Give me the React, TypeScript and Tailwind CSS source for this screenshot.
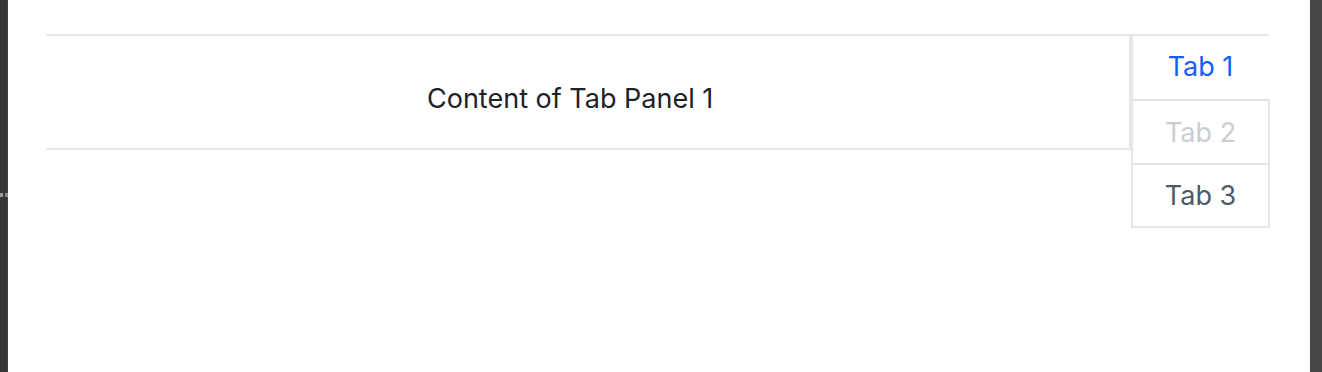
import React from "react";

export default function App() {
  return (
    <div className="flex h-[372px] w-full bg-white font-['Inter','Noto_Sans',sans-serif]">
      <div className="relative w-[8px] shrink-0 bg-[#363636] border-r border-[#424242]">
        <div className="absolute left-0 top-[193px] h-[4px] w-[3px] bg-[#9c9c9c]" />
        <div className="absolute left-[5px] top-[193px] h-[4px] w-[3px] bg-[#8a8a8a]" />
      </div>
      <div className="flex-1 pl-[38px] pr-[40px] pt-[34px]">
        <div className="flex items-start">
          <div className="flex h-[116px] flex-1 items-center border-y-2 border-r-2 border-[#e5e6eb] pl-[381px] pt-[13px] text-[27px] leading-none text-[#1d2129]">
            Content of Tab Panel 1
          </div>
          <div className="flex w-[139px] shrink-0 flex-col text-[27px] leading-none">
            <div className="flex h-[65px] items-center justify-center border-l-2 border-t-2 border-r-2 border-[#e5e6eb] border-r-white pb-[2px] text-[#165dff]">
              Tab 1
            </div>
            <div className="flex h-[64px] items-center justify-center border-x-2 border-t-2 border-[#e5e6eb] text-[#c9cdd4]">
              Tab 2
            </div>
            <div className="flex h-[65px] items-center justify-center border-2 border-[#e5e6eb] text-[#4e5969]">
              Tab 3
            </div>
          </div>
        </div>
      </div>
      <div className="w-[12px] shrink-0 bg-[#464646]" />
    </div>
  );
}
